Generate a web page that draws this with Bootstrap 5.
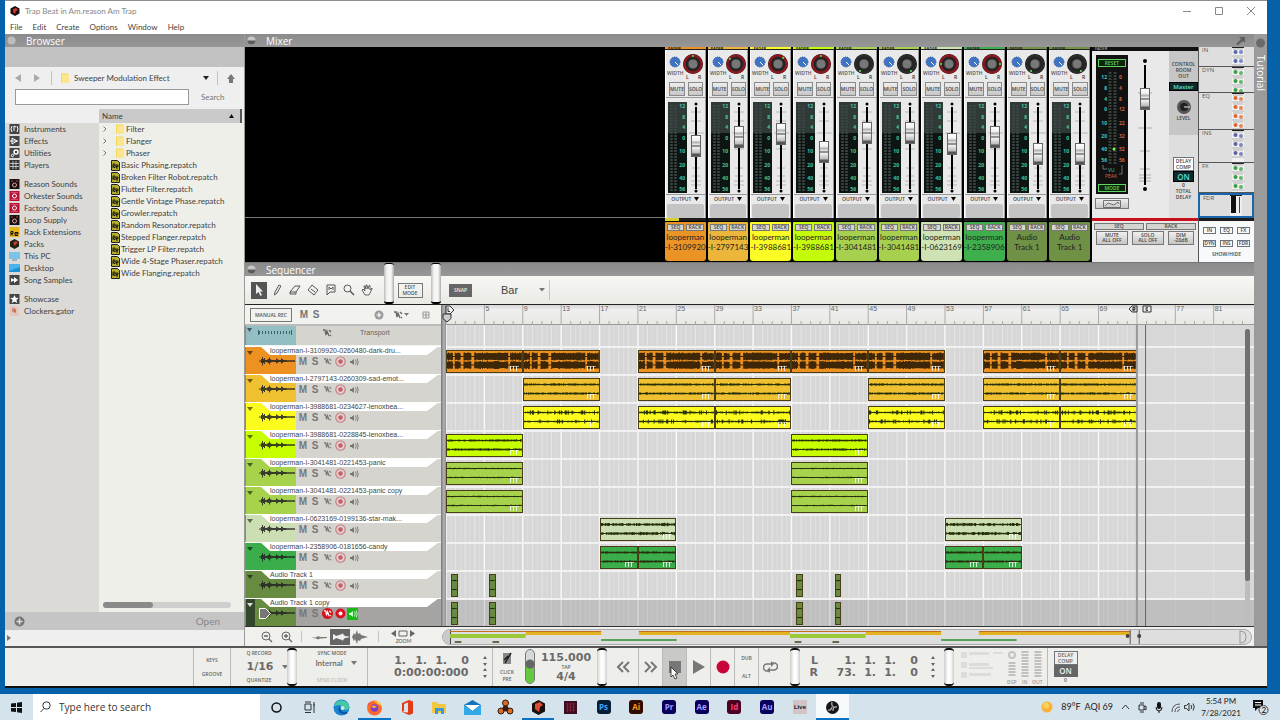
<!DOCTYPE html>
<html lang="en">
<head>
<meta charset="utf-8">
<meta name="viewport" content="width=device-width, initial-scale=1">
<title>Trap Beat in Am.reason Am Trap</title>
<link rel="stylesheet" href="https://cdn.jsdelivr.net/npm/bootstrap@5.3.0/dist/css/bootstrap.min.css">
<style>
:root{--ui:"Lato","Open Sans",sans-serif;--lab:"Open Sans","Noto Sans",sans-serif;--arial:"Liberation Sans",Arial,sans-serif;--num:"DejaVu Sans",sans-serif;--ink:#3f3f3f;--dim:#6c6c6c}
body{font-family:var(--ui);font-size:8px;line-height:12px;color:var(--ink);background:#0561a9;overflow:hidden}
button,input,select{font:inherit;color:inherit;padding:0;border:0;background:none;border-radius:0}
button{line-height:inherit}
svg{display:block;flex:none}
a{color:inherit;text-decoration:none}
.win{margin:0 13px 6px 5px;background:#fff;border-bottom:2px solid #101010;min-height:0}
.titlebar{height:20px;border-top:1px solid #8c8f92;color:#888;font-size:8px}
.menubar{height:14px;font-size:8px;color:#444;gap:10px;padding-left:5px}
.panelhead{height:13px;background:linear-gradient(#8b8b8b,#979797);color:#fff;font-family:var(--lab);font-size:10px;font-weight:500;line-height:12px;padding-left:2px;gap:10px}
.browser{width:240px;background:#efefef;border-right:1px solid #999}
.browser .band{height:20px;background:#c2c2c2}
.browser .navrow{height:22px}
.findbox{width:174px;height:16px;border:1px solid #999;background:#fff;margin-left:10px}
.places{width:94px;background:#dcdad7}
.places a,.files a{display:flex;align-items:center;height:12px;white-space:nowrap;font-size:8px}
.places .topcap{height:14px;background:#efefef}
.places a{padding-left:4px;gap:4px}
.places a.brk{margin-top:7px}
.files{background:#efefea;min-width:0}
.files .colhead{height:14px;background:#cacaca;padding:0 5px 0 3px;border-right:2px solid #555;margin-right:2px}
.files a{padding-left:12px;gap:1px}
.files a.dir{padding-left:4px;gap:8px}
.files a.dir span{margin-left:-10px;padding-left:3px}
.hscroll{height:6px;border-radius:3px;background:#cfcfcf;margin:0 13px 4px 4px}
.hscroll div{width:50px;height:6px;border-radius:3px;background:#8a8a8a}
.bfoot{height:18px;background:#c5c5c5;padding:0 24px 0 9px;font-size:10px;color:#888}
.bstat{height:16px;padding-left:1px}
.mixer{height:215px;background:#000}
.mixer .rack{border-bottom:1px solid #777;height:171px}
.strips{width:427px}
.strip{flex:1 1 0;min-width:0;padding-right:2px;font-family:var(--lab)}
.cap{height:3px;font-size:4px;line-height:3px;font-weight:700;color:#222;padding-left:3px;border-bottom:1px solid #222}
.face{background:#e9e9e9;height:168px;border-left:1px solid #fff;border-right:1px solid #999}
.knobs{height:30px}
.mini{font-family:var(--lab);font-size:5px;line-height:6px;font-weight:600;color:#444}
.ms{height:18px;padding:2px 3px 0;gap:3px;border-bottom:1px solid #999}
.ms button{flex:1;height:14px;background:linear-gradient(#eee,#c6c6c6);border:1px solid #8a8a8a;line-height:12px;text-align:center}
.fadebox{height:97px;border-bottom:1px solid #999;position:relative}
.vslot{position:absolute;width:12px;height:82px;left:24px;top:9px}
.vfader{-webkit-appearance:none;appearance:none;position:absolute;left:50%;top:50%;width:82px;height:12px;margin:-6px 0 0 -41px;transform:rotate(-90deg)}
.vfader::-webkit-slider-runnable-track{height:12px;background:linear-gradient(transparent 5px,#000 5px,#000 7px,transparent 7px)}
.vfader::-webkit-slider-thumb{-webkit-appearance:none;width:22px;height:10px;margin-top:1px;border:1px solid #666;background:linear-gradient(to right,#555 0 2px,#bbb 3px,#f4f4f4 9px,#333 10px,#eee 11px,#aaa 14px,#eee 15px,#fff)}
.out{height:8px;line-height:8px}
.well{height:14px;background:#c4c4c4;margin:1px 1px 0;border-radius:2px}
.bar3{height:3px;background:#1c1c1c}
.chname{height:39px;margin-top:1px;border-radius:1px 1px 3px 3px;text-align:center;font-family:var(--ui);font-size:8px;line-height:10px;color:#222}
.sr{gap:2px;padding:2px 2px 1px}
.sr button{flex:1;height:7px;background:#d4d4d0;border:1px solid #777;line-height:5px}
.master{width:106px;background:#e9e9e9;font-family:var(--lab)}
.master .cap2{height:4px;background:#111;color:#ccc;font-size:4px;line-height:4px;padding-left:3px}
.vu{width:32px;height:139px;background:#111;margin:4px 0 0 4px;padding:4px 2px}
.vu button{height:8px;width:100%;color:#5fd45f;border:1px solid #5fd45f;line-height:6px;text-align:center;background:#0b240b;font-size:5px;font-weight:600}
.ctl{width:29px;background:linear-gradient(#c6c6c6 84px,#dedede 84px);text-align:center}
.lcd{background:#10272b;color:#57e0d0;height:9px;line-height:8px;font-size:6px;font-weight:600;border:1px solid #000}
.mbtn{background:linear-gradient(#efefef,#c6c6c6);border:1px solid #777;text-align:center}
.sect{width:56px;background:#dedede;font-family:var(--lab);border-left:1px solid #555}
.sect .sec{border-bottom:1px solid #555;font-size:6px;line-height:7px;color:#555;padding:0 10px 0 3px}
.sect .sel{border:2px solid #1a66ad;margin-left:-1px}
.tutor{width:13px;background:#9b9b9b;color:#fff;font-family:var(--lab);font-size:10px;line-height:12px}
.tutor span{writing-mode:vertical-rl;margin-top:6px}
.toolbar{height:29px;background:linear-gradient(#f7f7f4,#eaeae5);border-bottom:1px solid #222}
.notch{width:10px;margin-top:-13px;height:41px;background:linear-gradient(to right,#bbb,#f4f4f2 3px,#f8f8f8 7px,#aaa);border-top:1px solid #000;border-bottom:2px solid #000;border-radius:3px;position:relative}
.tbtn{width:18px;height:17px;display:flex;align-items:center;justify-content:center}
.tbtn.on{background:#555;width:16px;margin:0 1px}
.boxed{border:1px solid #777;font-family:var(--lab);font-size:5px;font-weight:600;line-height:6px;text-align:center;color:#555}
.snap{width:23px;height:13px;background:#666;color:#eee;font-family:var(--lab);font-size:5px;font-weight:600}
.gridsel{font-family:var(--arial);font-size:11px;appearance:none;width:30px;color:#444}
.tracks{width:196px;background:#f2f2ee;overflow:hidden}
.thead{height:20px;border-bottom:1px solid #bbb}
.msb{font-family:var(--arial);font-weight:700;font-size:10px;color:#777;width:12px;text-align:center}
.trow{height:28px;position:relative;background:#d6d4cf;border-top:1px solid #fff;flex:none}
.trow.selrow{background:#a6a4a2}
.tcol{width:51px;height:100%;position:absolute;left:0;top:0;border-left:1px solid #888}
.tab{position:absolute;left:15px;right:2px;top:-1px;height:9px;background:#fff;clip-path:polygon(0 0,100% 0,calc(100% - 12px) 100%,10px 100%);padding-left:10px;font-family:var(--arial);font-size:7px;line-height:9px;white-space:nowrap;color:#444}
.tctl{position:absolute;left:52px;top:8px;height:13px}
.tctl button{width:12px;height:12px;display:flex;align-items:center;justify-content:center}
.tctl .ico{width:13px}
.trans{height:20px;background:#d6d4cf;border-top:1px solid #bbb;flex:none;position:relative;margin-bottom:1px}
.gutter{width:5px;background:linear-gradient(to right,#777,#b5b5b5 3px,#8a8a8a)}
.ruler{height:20px;background:linear-gradient(#d8d8d8,#efefef 5px,#e8e8e4);border-bottom:1px solid #999;position:relative;font-family:var(--arial);font-size:7px;color:#666}
.ruler span{position:absolute;top:-1px;line-height:9px;padding-left:1px}
.field{background:#d7d7d7;overflow:hidden;position:relative}
.gridlines{position:absolute;inset:0;width:100%;height:100%}
.lane{height:28px;flex:none;position:relative;border-top:2px solid #f1f1f1}
.lane.first{height:21px;border-top:0}
.lane.selrow{background:rgba(120,120,120,.25)}
.clip{position:absolute;top:2px;height:23px;border:1px solid #4a3c14;overflow:hidden}
.clip svg{width:100%;height:100%}
.clip i{position:absolute;right:3px;bottom:1px;width:9px;height:5px;background:repeating-linear-gradient(to right,#fffc 0 1px,transparent 1px 3px);border-top:1px solid #fff8}
.vscroll{position:absolute;right:4px;top:4px;bottom:4px;width:5px;border-radius:3px;background:#bdbdbd}
.vscroll div{height:86%;border-radius:3px;background:#707070}
.zoomrow{height:20px;background:#f0f0ec;border-top:1px solid #333}
.over{width:calc(100% - 199px);margin-right:2px;height:16px;border:1px solid #aaa;border-radius:8px;background:#dedede;overflow:hidden}
.transport{height:40px;background:#eeeeea;border-top:2px solid #555;color:var(--dim);font-family:var(--lab)}
.transport .cell{border-left:1px solid #bbb;display:flex;flex-direction:column;align-items:center;justify-content:center;flex:none}
.transport .gap9{width:10px;flex:none;background:linear-gradient(to right,#ccc,#fff 4px,#fafafa 7px,#ccc);border-top:2px solid #111;border-bottom:2px solid #111;border-radius:4px}
.tiny{font-size:5px;line-height:7px;font-weight:600;color:#666}
.num{font-family:var(--num);font-weight:700;font-size:11px;line-height:12px;color:#6a6a6a}
.num span{display:inline-block;text-align:right}
.taskbar{height:26px;background:#d5e3ec;font-family:var(--ui);color:#222}
.tsearch{width:227px;background:#fff;padding-left:7px}
.tsearch input{font-size:10px;width:180px;line-height:16px;outline:0;font-family:var(--lab)}
.tsearch input::placeholder{color:#333;opacity:1}
.tapps{width:589px;font-family:var(--lab)}
.tapps button{flex:1 1 0;display:flex;align-items:center;justify-content:center;border-bottom:2px solid transparent;border-top:2px solid transparent}
.tapps .run{border-bottom-color:#0a72c4}
.tapps .act{background:#f6fafc;border-top-color:#f6fafc}
.app{width:14px;height:14px;border-radius:3px;font-size:8px;line-height:14px;font-weight:700;text-align:center}
</style>
</head>
<body class="vh-100 d-flex flex-column">
<svg width="0" height="0" class="position-absolute">
<defs>
<symbol id="auto" viewBox="0 0 10 10"><path d="M1 2h2l1 5 1-4 2 5M7 2l2 2M8 7l1 1" fill="none" stroke="currentColor" stroke-width="1.3"/></symbol>
<symbol id="rec" viewBox="0 0 10 10"><circle cx="5" cy="5" r="4.3" fill="none" stroke="#cf7780"/><circle cx="5" cy="5" r="2" fill="#cf5b66"/></symbol>
<symbol id="spk" viewBox="0 0 10 10"><path d="M1 4h1.500l2.500-2v6L2.500 6H1z" fill="currentColor"/><path d="M6.500 2.500q1.500 2.500 0 5M8.200 1.500q2 3.500 0 7" fill="none" stroke="currentColor" stroke-width=".9"/></symbol>
<symbol id="wave" viewBox="0 0 36 12"><path d="M0 5.500h2V4h1V2h1v2h1V3h1v2h2l1-1h1V2.500h1V4l2 1h4V4l1-1v1l2 1h2V3.500h1V4h1v1h3l1 .2h8v1.600h-8l-1 .2h-3v1h-1v.5h-1V7h-2l-2 1v1l-1-1V7h-4l-2 1v1.500h-1V8H9L8 7H6v2H5V8H4v2.500H3V8H2V6.500H0z" fill="currentColor"/></symbol>
<symbol id="folder" viewBox="0 0 10 10"><path d="M1 .5h7v9H1z" fill="#f2d65e"/><path d="M2 1.500h7V10H2z" fill="#fbe68d"/></symbol>
<symbol id="patch" viewBox="0 0 9 11"><path d="M.5.5h6l2 2v8h-8z" fill="#b5ae2a" stroke="#222"/><path d="M2 8V4h2v2H2l2 2M5 6.500h2V5H5v3h2" fill="none" stroke="#111" stroke-width=".9"/></symbol>
<symbol id="half" viewBox="0 0 10 10"><circle cx="5" cy="5" r="4.500" fill="#c6c6c6"/><path d="M.5 5a4.500 4.500 0 0 0 9 0z" fill="#5c5c5c"/></symbol>
<symbol id="updn" viewBox="0 0 6 12"><path d="M1 4l2-3 2 3zM1 8l2 3 2-3z" fill="#666"/></symbol>
</defs>
</svg>

<main class="win flex-grow-1 d-flex flex-column">
  <header class="titlebar d-flex align-items-center flex-shrink-0">
    <svg class="ms-1 me-1" width="12" height="10" viewBox="-1 0 12 10"><path d="M5 0l4.500 2.500v5L5 10 .5 7.500v-5z" fill="#1a0d0d"/><path d="M3 3l3-1 2 2-2 1-1 3-2-2z" fill="#d0312b"/></svg>
    <span class="flex-grow-1">Trap Beat in Am.reason Am Trap</span>
    <button aria-label="Minimize" class="me-4"><svg width="8" height="8"><path d="M0 4.500h8" stroke="#888"/></svg></button>
    <button aria-label="Maximize" class="me-4"><svg width="8" height="8"><path d="M.5.5h7v7h-7z" fill="none" stroke="#888"/></svg></button>
    <button aria-label="Close" class="me-2"><svg width="8" height="8" class="me-1"><path d="M0 0l8 8M8 0L0 8" stroke="#888"/></svg></button>
  </header>
  <nav class="menubar d-flex align-items-center flex-shrink-0"><a href="#">File</a><a href="#">Edit</a><a href="#">Create</a><a href="#">Options</a><a href="#">Window</a><a href="#">Help</a></nav>

  <div class="d-flex flex-grow-1" style="min-height:0">
    <aside class="browser d-flex flex-column flex-shrink-0">
      <div class="panelhead d-flex align-items-center"><svg width="9" height="9"><circle cx="4.500" cy="4.500" r="4" fill="#bcbcbc"/></svg><span>Browser</span></div>
      <div class="band"></div>
      <div class="navrow d-flex align-items-center ps-2">
        <button aria-label="Back"><svg width="12" height="10"><path d="M8 1v8L2 5z" fill="#aaa"/></svg></button>
        <button aria-label="Forward" class="ms-2"><svg width="10" height="10"><path d="M1 1v8l6-4z" fill="#aaa"/></svg></button>
        <div class="vr mx-2 my-1"></div>
        <svg width="10" height="12"><use href="#folder"/></svg>
        <span class="ms-1 flex-grow-1">Sweeper Modulation Effect</span>
        <svg width="6" height="4" class="me-1"><path d="M0 0h6L3 4z" fill="#222"/></svg><div class="vr ms-1 me-2 my-1"></div>
        <button aria-label="Up" class="me-2"><svg width="10" height="9"><path d="M5 0l4 5H7v4H3V5H1z" fill="#777"/></svg></button>
      </div>
      <form class="d-flex align-items-center pb-1"><input class="findbox" type="text" aria-label="Search browser"><button type="button" class="ms-2 ps-1" style="color:#777">Search</button></form>
      <div class="d-flex flex-grow-1">
        <nav class="places" id="places"><div class="topcap"></div></nav>
        <div class="files flex-grow-1 d-flex flex-column">
          <div class="colhead d-flex align-items-center justify-content-between"><span>Name</span><svg width="6" height="6"><path d="M0 5h5L2.500 1z" fill="#111"/></svg></div>
          <div id="files" class="flex-grow-1"></div>
          <div class="hscroll"><div></div></div>
        </div>
      </div>
      <div class="bfoot d-flex align-items-center justify-content-between"><button aria-label="Add"><svg width="11" height="11"><circle cx="5.500" cy="5.500" r="5" fill="#777"/><path d="M2.500 5.500h6M5.500 2.500v6" stroke="#ddd" stroke-width="1.500"/></svg></button><button>Open</button></div>
      <div class="bstat d-flex align-items-center"><svg width="6" height="6"><path d="M1 0v6l4-3z" fill="#777"/></svg></div>
    </aside>

    <div class="flex-grow-1 d-flex flex-column" style="min-width:0">
      <div class="panelhead d-flex align-items-center flex-shrink-0"><svg width="9" height="9"><use href="#half"/></svg><span class="flex-grow-1">Mixer</span><svg width="10" height="8" class="me-2"><path d="M3 0h6v6L7 4 2 8 0 7l5-5z" fill="#606060"/></svg></div>
      <section class="mixer d-flex flex-shrink-0">
        <div class="flex-grow-1"><div class="rack"></div></div>
        <div class="strips d-flex" id="strips"></div>
        <div class="master d-flex flex-column">
          <div class="cap2">FADER</div>
          <div class="d-flex" style="height:167px">
            <div>
              <div class="vu d-flex flex-column"><button>RESET</button>
                <svg class="flex-grow-1" width="28" viewBox="0 0 28 117" id="vu"></svg>
                <button>MODE</button></div>
              <button class="mbtn d-block" style="width:34px;height:11px;margin:4px 0 0 3px" aria-label="Curve"><svg class="mx-auto" width="18" height="8"><path d="M.5.500h17v7H.500zM2 6l3-3 3 1 3 1 4-3 1 2" fill="none" stroke="#555" stroke-width=".8"/></svg></button>
            </div>
            <div class="flex-grow-1 position-relative">
              <svg width="32" height="150"><path d="M9 42h14M9 77h14M11 100h10M11 118h10M10 124h12M10 127h12M10 130h12" stroke="#aaa"/><circle cx="16" cy="10" r="2"/><circle cx="16" cy="138" r="2"/></svg>
              <div class="vslot" style="left:10px;top:14px;height:120px"><input class="vfader" style="width:120px;margin-left:-60px" type="range" min="0" max="98" value="75" aria-label="Master level"></div>
            </div>
            <div class="ctl mini"><div style="padding:10px 0 3px">CONTROL<br>ROOM<br>OUT</div><div class="lcd">Master</div>
              <svg class="mx-auto mt-2" width="18" height="16"><circle cx="9" cy="8" r="7" fill="#555"/><circle cx="9" cy="8" r="4" fill="#222"/><path d="M9 8h6" stroke="#eee"/></svg><div>LEVEL</div>
              <div style="height:36px"></div><div class="mx-1 bg-white border border-secondary">DELAY<br>COMP</div><button class="lcd d-block mx-1" style="width:21px;height:11px;font-size:8px;line-height:9px">ON</button><div>0<br>TOTAL<br>DELAY</div></div>
          </div>
          <div style="height:3px;background:#c8101c"></div>
          <div class="sr mini d-flex"><button>SEQ</button><button>RACK</button></div>
          <div class="mini d-flex gap-1 px-1" style="line-height:5px"><button class="mbtn flex-fill" style="height:14px">MUTE<br>ALL OFF</button><button class="mbtn flex-fill">SOLO<br>ALL OFF</button><button class="mbtn flex-fill">DIM<br>-20dB</button></div>
        </div>
        <div class="sect d-flex flex-column" id="sect"></div>
      </section>

      <div class="panelhead d-flex align-items-center flex-shrink-0" style="border-top:1px solid #777;height:14px"><svg width="9" height="9"><use href="#half"/></svg><span>Sequencer</span></div>
      <div class="toolbar d-flex align-items-center flex-shrink-0" id="toolbar">
        <div class="d-flex align-items-center flex-shrink-0" style="width:139px;padding-left:5px">
          <button class="tbtn on" aria-label="Select"><svg width="10" height="12"><path d="M2 0v10l2.500-2 2 4 1.500-1-2-3.500h3z" fill="#eee"/></svg></button>
          <button class="tbtn" aria-label="Pencil"><svg width="10" height="12"><path d="M3 8l4-7 2 1-4 7-2.500 2z" fill="none" stroke="#555"/></svg></button>
          <button class="tbtn" aria-label="Eraser"><svg width="12" height="10"><path d="M1 7l5-6h5L7 7v2H1zM1 7h6" fill="none" stroke="#555"/></svg></button>
          <button class="tbtn" aria-label="Razor"><svg width="12" height="12"><path d="M1 6l4-5 6 5-4 5zM4 5l4 3" fill="none" stroke="#555"/></svg></button>
          <button class="tbtn" aria-label="Mute"><svg width="12" height="12"><path d="M2 1h8v7H5l-3 3zM4 6V3l2 2 2-2v3" fill="none" stroke="#555"/></svg></button>
          <button class="tbtn" aria-label="Magnify"><svg width="12" height="12"><circle cx="4.500" cy="4.500" r="3.500" fill="none" stroke="#555"/><path d="M7 7l4 4" stroke="#555" stroke-width="1.500"/></svg></button>
          <button class="tbtn" aria-label="Hand"><svg width="12" height="12"><path d="M4 11L1 6l1-1 2 2-1-5h1l1 3V1h1l1 4 1-3.500h1L9 6l2-2v1L8 11z" fill="none" stroke="#555" stroke-width=".9"/></svg></button>
        </div>
        <div class="notch flex-shrink-0"></div>
        <div class="flex-shrink-0 d-flex justify-content-center" style="width:37px;padding-right:5px"><button class="boxed" style="width:25px;height:15px">EDIT<br>MODE</button></div>
        <div class="notch flex-shrink-0"></div>
        <button class="snap ms-2" style="margin-right:29px">SNAP</button>
        <select class="gridsel" aria-label="Snap value"><option>Bar</option></select>
        <svg width="6" height="4" class="ms-2"><path d="M0 0h6L3 3.500z" fill="#777"/></svg>
        <div class="vr ms-1 my-1"></div>
      </div>
      <section class="d-flex flex-grow-1" style="min-height:0">
        <div class="tracks d-flex flex-column flex-shrink-0" id="tracks">
          <div class="thead d-flex align-items-center flex-shrink-0"><button class="boxed" style="width:42px;height:14px;margin:0 6px 0 5px">MANUAL REC</button><button class="msb">M</button><button class="msb me-5">S</button>
            <svg width="10" height="10" class="ms-1"><circle cx="5" cy="5" r="4.500" fill="#9a9a9a"/><path d="M2.500 5h5M5 2.500v5" stroke="#fff" stroke-width="1.200"/></svg><svg class="ms-2" width="12" height="10" color="#666"><use href="#auto"/></svg><svg width="6" height="4"><path d="M0 0h5L2.500 3z" fill="#777"/></svg><svg class="ms-2 ps-1" width="13" height="8"><path d="M1 1h6v6H1zM4 1v6M1 4h6" fill="none" stroke="#999"/></svg></div>
          <div class="trans"><div class="tcol" style="background:#93bfc2"><svg width="46" height="12"><path d="M1 2h5L3.500 6z" fill="#456"/><path d="M12.500 4v5M45.500 4v5" stroke="#3c6468"/><path d="M13 6.500h32" stroke="#3c6468" stroke-width="3" stroke-dasharray="1 2"/></svg></div><div class="tctl d-flex align-items-center" style="top:0;left:77px;color:#666"><svg width="10" height="10"><use href="#auto"/></svg><span style="margin-left:28px;font-family:var(--arial);font-size:7px">Transport</span></div></div>
        </div>
        <div class="gutter"></div>
        <div class="flex-grow-1 d-flex flex-column" style="min-width:0">
          <div class="ruler flex-shrink-0" id="ruler"></div>
          <div class="field flex-grow-1 d-flex flex-column" id="field"></div>
        </div>
      </section>
      <div class="zoomrow d-flex align-items-center flex-shrink-0">
        <button aria-label="Zoom out" style="margin-left:16px"><svg width="12" height="12"><circle cx="5" cy="5" r="4" fill="none" stroke="#666"/><path d="M3 5h4M8 8l3 3" stroke="#666" stroke-width="1.300"/></svg></button>
        <button aria-label="Zoom in" class="ms-2"><svg width="12" height="12"><circle cx="5" cy="5" r="4" fill="none" stroke="#666"/><path d="M3 5h4M5 3v4M8 8l3 3" stroke="#666" stroke-width="1.300"/></svg></button>
        <div class="vr mx-2 my-1"></div>
        <svg width="20" height="12"><path d="M1 6.500h5L8 5l2 1h7v1l-7 .5L8 8.500 6 7.500z" fill="#777"/></svg>
        <div style="background:#666"><svg width="20" height="16"><path d="M2 8h1V5l2 1 1 1 6-2V4l3 3 4 .5v1L15 9l-3 3v-1L6 9l-1 1-2 1V8z" fill="#eee"/></svg></div>
        <svg width="20" height="14"><path d="M2 7l2-4 1 2 2-5 1 4 2-1 1 2 7 2-7 2-1 2-2-1-1 4-2-5-1 2z" fill="#777"/></svg>
        <div class="vr mx-2 my-1"></div>
        <div class="tiny text-center ms-1 me-auto"><svg width="25" height="9"><path d="M0 4.500L5 1v7zM24 4.500L19 1v7z" fill="#666"/><path d="M8 2h8v5H8z" fill="none" stroke="#666"/></svg>ZOOM</div>
        <div class="over"><svg id="over" width="100%" height="14" viewBox="0 0 806 14" preserveAspectRatio="none"></svg></div>
      </div>
    </div>
    <aside class="tutor d-flex flex-column align-items-center"><svg width="11" height="11" class="mt-1"><circle cx="5.500" cy="5" r="4.500" fill="#6a6a6a"/></svg><span>Tutorial</span></aside>
  </div>

  <footer class="transport d-flex flex-shrink-0">
    <div style="width:188px"></div>
    <div class="cell tiny" style="width:37px;gap:7px"><button>KEYS</button><button>GROOVE</button></div>
    <div class="cell tiny" style="width:57px"><span>Q RECORD</span><button class="num my-1 d-flex align-items-center ps-3">1/16<svg width="6" height="4" class="ms-2"><path d="M0 0h6L3 4z" fill="#777"/></svg></button><span>QUANTIZE</span></div>
    <div class="gap9"></div>
    <div class="cell tiny border-0" style="width:70px"><span>SYNC MODE</span><button class="d-flex align-items-center ps-2" style="font-family:var(--ui);font-size:8px;line-height:12px">Internal<svg width="6" height="4" class="ms-2"><path d="M0 0h6L3 4z" fill="#777"/></svg></button><span class="mt-2" style="color:#bbb">SEND CLOCK</span></div>
    <div class="cell num" style="width:125px;padding-left:22px"><div class="d-flex align-items-center"><div style="width:76px;margin-right:12px"><span style="width:12px">1.</span><span style="width:21px">1.</span><span style="width:20px">1.</span><span style="width:22px">0</span><br>0:00:00:000</div><div><svg width="6" height="12"><use href="#updn"/></svg><svg width="6" height="12"><use href="#updn"/></svg></div></div></div>
    <div class="cell tiny" style="width:29px"><svg width="10" height="13"><path d="M1 1h8v11H1z" fill="#888"/><path d="M3 11L9 1M2 8l4-4" stroke="#222" stroke-width="1.500"/></svg><span class="mt-1">CLICK</span><span>PRE</span></div>
    <div class="position-relative" style="width:18px"><svg width="18" height="38"><rect x="4.500" y="1.500" width="9" height="34" rx="4.500" fill="#d8d8d8" stroke="#777"/><path d="M5 16h8v15a4 4 0 0 1-8 0z" fill="#63c83f"/><circle cx="9" cy="16" r="4.500" fill="#666"/></svg></div>
    <div class="cell num border-0" style="width:54px"><span>115.000</span><span class="tiny" style="font-family:var(--lab)">TAP</span><span>4/4</span></div>
    <div class="gap9 ms-1"></div>
    <div class="cell border-0" style="width:31px"><button aria-label="Rewind"><svg width="14" height="12"><path d="M7 1L2 6l5 5M13 1L8 6l5 5" fill="none" stroke="#777" stroke-width="2"/></svg></button></div>
    <div class="cell" style="width:24px"><button aria-label="Fast forward"><svg width="14" height="12"><path d="M1 1l5 5-5 5M7 1l5 5-5 5" fill="none" stroke="#777" stroke-width="2"/></svg></button></div>
    <div class="cell position-relative" style="width:24px;background:#c9c9c6"><button aria-label="Stop"><svg width="12" height="12"><path d="M0 0h12v12H0z" fill="#777"/></svg></button><svg class="position-absolute" style="left:7px;top:18px" width="9" height="14"><path d="M1 1v10l2-2 2 4 2-1-2-4h3z" fill="#fff" stroke="#222" stroke-width=".8"/></svg></div>
    <div class="cell" style="width:24px"><button aria-label="Play"><svg width="12" height="14"><path d="M0 0v14l12-7z" fill="#777"/></svg></button></div>
    <div class="cell" style="width:24px"><button aria-label="Record"><svg width="14" height="14"><circle cx="7" cy="7" r="6.500" fill="#c8063c"/></svg></button></div>
    <div class="cell tiny" style="width:24px;gap:11px"><button>DUB</button><button>ALT</button></div>
    <div class="cell" style="width:28px"><button aria-label="Loop" class="pe-1"><svg width="15" height="12"><path d="M6 10H4a3.500 3.500 0 0 1 0-7h5M9 2h2a3.500 3.500 0 0 1 0 7H6" fill="none" stroke="#777" stroke-width="1.500"/><path d="M8 0l3 3-3 3zM7 6L4 9l3 3z" fill="#777"/></svg></button></div>
    <div class="gap9 ms-1"></div>
    <div class="cell num border-0" style="width:144px"><div class="d-flex align-items-center"><div style="width:110px;margin-right:12px"><span style="width:10px">L</span><span style="width:38px">1.</span><span style="width:20px">1.</span><span style="width:20px">1.</span><span style="width:22px">0</span><br><span style="width:10px">R</span><span style="width:38px">73.</span><span style="width:20px">1.</span><span style="width:20px">1.</span><span style="width:22px">0</span></div><div><svg width="6" height="12"><use href="#updn"/></svg><svg width="6" height="12"><use href="#updn"/></svg></div></div></div>
    <div class="gap9"></div>
    <div class="cell border-0" style="width:93px"><svg width="92" height="36" style="font-family:var(--lab);font-size:5px;font-weight:600"><g fill="#dcdcd8"><path d="M6 3h6v6H6zM6 13h6v6H6zM6 23h6v6H6zM14 3h20v3H14zM14 14h20v3H14zM14 18h24v2H14zM14 24h22v3H14zM38 3h10v2h-10z"/></g><circle cx="57" cy="6" r="3" fill="none" stroke="#c4c4c0" stroke-width="2"/><g fill="none" stroke="#c0c0bc" stroke-width="7" stroke-dasharray="2 1"><path d="M57 13v15M70 2v26M83 2v26"/></g><g fill="#999"><text x="52" y="35">DSP</text><text x="67" y="35">IN</text><text x="77" y="35">OUT</text></g></svg></div>
    <div class="cell tiny" style="width:36px"><div class="border border-secondary text-center" style="width:24px;line-height:6px">DELAY<br>COMP</div><button style="width:24px;height:12px;background:#666;color:#eee;font-size:8px;line-height:12px">ON</button><span>0</span></div>
  </footer>
</main>

<footer class="taskbar d-flex flex-shrink-0">
  <button aria-label="Start" style="width:33px" class="d-flex align-items-center justify-content-center"><svg width="11" height="11"><path d="M0 1.500L5 1v4H0zM6 .8L11 0v5H6zM0 6h5v4l-5-.5zM6 6h5v5l-5-.8z" fill="#111"/></svg></button>
  <label class="tsearch d-flex align-items-center"><svg width="11" height="12" class="me-2"><circle cx="6.500" cy="4.500" r="3.700" fill="none" stroke="#333"/><path d="M4 7.500L.5 11" stroke="#333"/></svg><input type="text" placeholder="Type here to search"></label>
  <div class="tapps d-flex" id="tapps"></div>
  <div class="ms-auto d-flex align-items-center" style="font-size:9px">
    <svg width="12" height="12"><circle cx="6" cy="6" r="5.500" fill="#f9b233"/><circle cx="5" cy="4.500" r="3" fill="#fdd35f"/></svg><span class="ms-2">89°F&nbsp; AQI 69</span>
    <svg width="9" height="6" class="ms-2 me-2"><path d="M1 5l3.500-4L8 5" fill="none" stroke="#333"/></svg>
    <svg width="9" height="11" class="me-2"><path d="M1 3h5v5H1zM6 5l2-1v4L6 7M2 1h4M2 10h4" fill="none" stroke="#333"/></svg>
    <svg width="8" height="11" class="me-2"><rect x="2" width="4" height="7" rx="2" fill="#111"/><path d="M1 5q0 4 3 4t3-4M4 9v2" stroke="#111" fill="none"/></svg>
    <svg width="9" height="9" class="me-1"><path d="M1 9Q1 1 9 1M4 9q0-5 5-5M6.500 9q0-2 2.500-2.500" fill="none" stroke="#555"/></svg>
    <svg width="12" height="10" class="me-1"><path d="M.5 3.500h2L5 1v8L2.500 6.500h-2zM7 3q1.500 2 0 4M9 1.500q2.500 3.500 0 7" fill="none" stroke="#333"/></svg>
    <div class="text-center" style="font-size:8px;line-height:12px;width:42px">5:54 PM<br>7/28/2021</div>
    <svg width="20" height="18" style="margin:0 10px 0 8px"><path d="M3 2h10v8H8l-3 3v-3H3z" fill="#111"/><path d="M5 4.500h6M5 7h6" stroke="#fff"/><circle cx="13.500" cy="12" r="4.500" fill="#d5e3ec" stroke="#444"/><text x="11.500" y="15" font-size="8">2</text></svg>
  </div>
</footer>

<script>
const $ = id => document.getElementById(id);
let seed = 7;
const rnd = () => (seed = (seed * 16807) % 2147483647) / 2147483647;

/* browser */
const sq = (bg, inner) => `<svg width="11" height="10" viewBox="0 0 11 10"><path d="M.5 0h10v10H.5z" fill="${bg}"/>${inner}</svg>`;
const places = [
 ['Instruments', sq('#444','<path d="M3 2q-2 3 0 6M8 2q2 3 0 6M5 7V2l2 1" fill="none" stroke="#fff"/>')],
 ['Effects', sq('#444','<path d="M3 2v6l5-3zM1 5h8" fill="none" stroke="#fff"/>')],
 ['Utilities', sq('#444','<circle cx="7" cy="4" r="2" fill="none" stroke="#fff" stroke-width="1.500"/><circle cx="3.500" cy="7.500" r="1.200" fill="none" stroke="#fff"/>')],
 ['Players', sq('#333','<path d="M1 3.500h9M1 6.500h9M4 1v8M7 1v8" stroke="#ddd" stroke-width=".8"/>')],
 ['Reason Sounds', sq('#161212','<circle cx="5.500" cy="6" r="2" fill="none" stroke="#e8a0a0"/><path d="M2 2h2M7 2h2" stroke="#c33"/>'), 1],
 ['Orkester Sounds', sq('#b80f35','<circle cx="5.500" cy="5" r="2" fill="none" stroke="#fff"/><path d="M2 1.500h7M2 8.500h7" stroke="#e87090" stroke-width=".6"/>')],
 ['Factory Sounds', sq('#b80f35','<circle cx="5.500" cy="5" r="2" fill="none" stroke="#fff"/><path d="M2 1.500h7M2 8.500h7" stroke="#e87090" stroke-width=".6"/>')],
 ['Loop Supply', sq('#161212','<circle cx="5.500" cy="6" r="2" fill="none" stroke="#e8a0a0"/><path d="M2 2h2M7 2h2" stroke="#c33"/>')],
 ['Rack Extensions', sq('#e7b417','<path d="M2 8.500v-4h2v2H2l2 2M6 7h3V5.500H6v3h3" fill="none" stroke="#111"/>')],
 ['Packs', '<svg width="11" height="10" viewBox="0 0 11 10"><path d="M5.500 0L10 2.500v5L5.500 10 1 7.500v-5z" fill="#221"/><path d="M4 4l3-2 2 2-2 1-1 2z" fill="#d33"/></svg>'],
 ['This PC', '<svg width="11" height="10"><path d="M0 1h11v7H0z" fill="#7cc3e8"/><path d="M3 9h5" stroke="#789"/></svg>'],
 ['Desktop', '<svg width="11" height="10"><path d="M0 1h11v8H0z" fill="#1f8fd6"/><path d="M0 1h11v3L0 8z" fill="#4bb2ee"/></svg>'],
 ['Song Samples', sq('#444','<path d="M2 3l4 2-4 2zM5 2l4 3-4 3z" fill="#fff"/>')],
 ['Showcase', sq('#444','<path d="M5.500 1l1.200 2.800 3 .2-2.300 2 .8 3-2.700-1.600L2.800 9l.8-3-2.300-2 3-.2z" fill="#fff"/>'), 1],
 ['Clockers.gator', '<svg width="11" height="10"><path d="M1 0h7l2 2v8H1z" fill="#e3c6bd"/><path d="M3 3h3v4M3 5h4" fill="none" stroke="#c0503c"/></svg>']];
places.forEach(([t, i, b]) => $('places').insertAdjacentHTML('beforeend', `<a href="#" class="${b ? 'brk' : ''}">${i}${t}</a>`));
['Filter','Flanger','Phaser'].forEach(t => $('files').insertAdjacentHTML('beforeend', `<a href="#" class="dir"><svg width="4" height="8"><path d="M.5 1.500L3 4 .5 6.500" fill="none" stroke="#777"/></svg><svg width="10" height="10"><use href="#folder"/></svg><span>${t}</span></a>`));
['Basic Phasing','Broken Filter Robot','Flutter Filter','Gentle Vintage Phase','Growler','Random Resonator','Stepped Flanger','Trigger LP Filter','Wide 4-Stage Phaser','Wide Flanging'].forEach(t => $('files').insertAdjacentHTML('beforeend', `<a href="#"><svg width="9" height="11"><use href="#patch"/></svg>${t}.repatch</a>`));

/* mixer strips: first line, second line, colour, fader centre, pan ring, pan angle */
const chans = [
 ['looperman','-I-3109920','#ea9425',147,'#8c1820',0],['looperman','-I-2797143','#ebb63a',138,'#8c1820',-50],
 ['looperman','-I-3988681','#fbfb25',135,'#8c1820',40],['looperman','-I-3988681','#c4fb0b',153,'#8c1820',0],
 ['looperman','-I-3041481','#a8d04f',134,'#2b2b2b',-150],['looperman','-I-3041481','#a8d04f',134,'#2b2b2b',150],
 ['looperman','-I-0623169','#cfe2b4',145,'#8c1820',-90],['looperman','-I-2358906','#3fae4c',138,'#8c1820',90],
 ['Audio','Track 1','#6f9145',155,'#2b2b2b',-150],['Audio','Track 1','#6f9145',155,'#2b2b2b',150]];
const scale = [['12',6],['8',17],['4',27],['0',38],['10',51],['20',65],['40',78],['56',89]];
chans.forEach(([a, b, c, f, ring, ang], n) => $('strips').insertAdjacentHTML('beforeend', `
<div class="strip"><div class="cap" style="background:${c}">FADER</div>
<div class="face"><div class="knobs"><svg width="38" height="30" class="mini">
<circle cx="9" cy="12" r="5" fill="#3f74c4"/><circle cx="9" cy="12" r="5" fill="none" stroke="#27508e" stroke-width="1" stroke-dasharray="1 1"/><path d="M9 12l3 3" stroke="#fff"/>
<circle cx="27" cy="14" r="10" fill="#222"/><circle cx="27" cy="14" r="8.500" fill="none" stroke="${ring}" stroke-width="2.500"/><circle cx="27" cy="14" r="5" fill="#777" stroke="#333"/>
<circle cx="27" cy="6" r="1" fill="#5e5" transform="rotate(${ang} 27 14)"/>
<text x="1" y="25" fill="#555">WIDTH</text><text x="20" y="29" fill="#333">L</text><text x="32" y="29" fill="#333">R</text></svg></div>
<div class="ms mini d-flex"><button>MUTE</button><button>SOLO</button></div>
<div class="fadebox"><svg width="38" height="96"><rect x="2" y="4" width="19" height="91" fill="#0c1512"/><rect x="2" y="4" width="19" height="31" fill="#2f3935"/>
<path d="M5.500 7v86M9.500 7v86" stroke="#3d4644" stroke-width="2.500" stroke-dasharray="2 1"/>
${scale.map(([t, y]) => `<text x="19" y="${y + 4}" text-anchor="end" fill="#45c9a0" style="font-size:5px;font-weight:700">${t}</text>`).join('')}
<path d="M25 14h10M25 23h10M23 35h15M25 51h10M26 70h8M26 78h8M25 83h10M25 87h10" stroke="#aaa" stroke-width=".8"/><circle cx="30" cy="6" r="1.500"/><circle cx="30" cy="93" r="1.500"/></svg>
<div class="vslot"><input class="vfader" type="range" min="0" max="60" value="${179 - f}" aria-label="Channel ${n + 1} level"></div></div>
<div class="out mini d-flex justify-content-center align-items-center" style="gap:3px">OUTPUT<svg width="5" height="4"><path d="M0 0h5L2.500 4z"/></svg></div><div class="well"></div></div>
<div class="bar3"${n ? '' : ' style="background:linear-gradient(to right,#d8d030 14px,#1c1c1c 14px)"'}></div>
<div class="chname" style="background:${c}"><div class="sr mini d-flex"><button>SEQ</button><button>RACK</button></div>${a}<br>${b}</div></div>`));

/* master meter */
const rt = ['0','4','8','12','22','32','52','56'], ys = [10,21,32,42,56,69,82,93];
$('vu').innerHTML = `<path d="M12 5v92M17 5v92" stroke="#34403c" stroke-width="3" stroke-dasharray="2 1"/><circle cx="16" cy="82" r="1.500" fill="#7f3"/>` +
 ys.map((y, i) => `<text x="9" y="${y + 2}" text-anchor="end" font-size="5" font-weight="700" fill="#45c9c0">${scale[i][0]}</text><text x="21" y="${y + 2}" font-size="5" font-weight="700" fill="#d3603c">${rt[i]}</text>`).join('') +
 `<text x="10" y="105" font-size="5" fill="#45c9c0">VU</text><text x="7" y="111" font-size="5" fill="#e06040">PEAK</text><path d="M5 98v4h4M24 98v9h-3" fill="none" stroke="#999" stroke-width=".7"/>`;

/* channel section navigator */
[['IN',20,'#5566b0'],['DYN',26,'#35a040'],['EQ',37,'#e0642c'],['INS',33,'#5c60a8'],['FX',30,'#35a040'],['FDR',25,'#222']].forEach(([t, h, c]) => {
  let k = '';
  if (t === 'FDR') k = '<path d="M1 1h5v17H1z" fill="#111"/><path d="M9.500 2v16" stroke="#444"/>';
  else for (let y = 5; y < h - 2; y += 9) k += `<circle cx="3.500" cy="${y}" r="2" fill="${c}"/><circle cx="9" cy="${y + (t === 'IN' ? 0 : 1)}" r="2" fill="${c}" opacity=".75"/><path d="M0 ${y + 4}h12M1 ${y - 3}h10" stroke="#999" stroke-width=".7"/>`;
  $('sect').insertAdjacentHTML('beforeend', `<div class="sec d-flex justify-content-between ${t === 'FDR' ? 'sel' : ''}" style="height:${h}px"><span>${t}</span><svg width="12" height="${h - (t === 'FDR' ? 4 : 1)}"><path d="M0 0h12v${h}H0z" fill="#efefef"/>${k}<path d="M0 .5h12" stroke="#222"/></svg></div>`);
});
$('sect').insertAdjacentHTML('beforeend', `<div class="bar3"></div><div class="mini flex-grow-1 bg-light text-center pt-1"><div class="d-grid gap-1 px-1" style="grid-template-columns:1fr 1fr 1fr;row-gap:6px!important;padding-top:2px">${['IN','EQ','FX','DYN','INS','FDR'].map(t => `<button class="border border-secondary" style="height:7px;line-height:5px">${t}</button>`).join('')}</div><div class="mt-1">SHOW/HIDE</div></div>`);

/* tracks: name, colour, clips as [start bar, bars], wave style */
const BARS = 84.2;
const eight = (...s) => s.map(b => [b, 8]);
const hits = [[1.5,.7],[5.5,.7],[37.5,.7],[41.5,.7]];
const tracks = [
 ['looperman-I-3109920-0260480-dark-dru...','#ed9121',eight(1,9,21,29,37,45,57,65),'block'],
 ['looperman-I-2797143-0260309-sad-emot...','#efc130',eight(9,21,29,45,57,65),'mid'],
 ['looperman-I-3988681-0234627-lenoxbea...','#fbfb1e',eight(9,21,29,45,57,65),'spike'],
 ['looperman-I-3988681-0228845-lenoxbea...','#c8ff00',eight(1,37),'mid'],
 ['looperman-I-3041481-0221453-panic','#a6d24c',eight(1,37),'thin'],
 ['looperman-I-3041481-0221453-panic copy','#a6d24c',eight(1,37),'thin'],
 ['looperman-I-0623169-0199136-star-mak...','#cbdfb2',eight(17,53),'fat'],
 ['looperman-I-2358906-0181656-candy','#3bae4b',[[17,4],[21,4],[53,4],[57,4]],'mid'],
 ['Audio Track 1','#678c41',hits,'thin'],
 ['Audio Track 1 copy','#678c41',hits,'thin']];
function wave(kind, w) {
  let d = '';
  if (kind === 'block') {
    [[0,6],[8,14],[17,25],[28,63],[65,77]].forEach(([a, b]) => [5.5, 14].forEach(y => {
      for (let x = a; x < b; x += 1) { const h = 3 + rnd() * 1; d += `M${x} ${(y - h).toFixed(1)}h1.100v${(h * 2).toFixed(1)}h-1.100z`; }
    }));
    return d + 'M0 5h77v1H0zM0 13.500h77v1H0z';
  }
  const amp = {mid:.7, spike:.4, thin:.2, fat:1.200}[kind];
  [5.5, 14.5].forEach(y => { for (let x = 0; x < w; x++) {
    const h = .5 + rnd() * amp + (kind === 'spike' && rnd() > .82 ? 1.3 : 0);
    d += `M${x} ${(y - h).toFixed(1)}h1.100v${(h * 2).toFixed(1)}h-1.100z`; } });
  return d;
}
const pct = b => (b / BARS * 100).toFixed(3) + '%';

/* ruler and grid lines */
let g = '', r = '';
for (let b = 0; b < 84; b++) {
  const big = b % 4 === 0;
  if (b <= 72 || big) g += `<line x1="${pct(b)}" x2="${pct(b)}" y1="0" y2="100%" stroke="${big ? (b <= 72 ? '#f8f8f8' : '#e0e0e0') : '#e6e6e6'}" stroke-width="${big && b <= 72 ? 1.5 : 1}"/>`;
  if (b < 72) g += `<line x1="${pct(b + .5)}" x2="${pct(b + .5)}" y1="0" y2="100%" stroke="#dedede"/>`;
  r += `<line x1="${pct(b)}" x2="${pct(b)}" y1="${big ? 0 : 16}" y2="20" stroke="#aaa"/>`;
}
$('ruler').innerHTML = `<svg class="gridlines">${r}</svg>` + [5,9,13,17,21,25,29,33,37,41,45,49,53,57,61,65,69,77,81].map(b => `<span style="left:${pct(b - 1)}">${b}</span>`).join('') +
 `<span style="left:0"><svg width="12" height="20" style="margin-left:-5px;overflow:visible"><path d="M4 2h4l4 4-4 4H4z" fill="#eee" stroke="#333"/><path d="M6 3.500v4h2" fill="none" stroke="#333"/><path d="M1 10h8v4.500L5 18l-4-3.500z" fill="#ccc" stroke="#333"/></svg></span>
 <span style="left:${pct(71)}"><svg width="10" height="10"><path d="M9 2H4L1 5l3 3h5z" fill="#ddd" stroke="#333"/><path d="M5 7V3.500h2v2H5l2 2" fill="none" stroke="#333"/></svg></span>
 <span style="left:${pct(72.4)}"><svg width="10" height="10"><path d="M1 2h8v6H1z" fill="#eee" stroke="#333"/><path d="M6 3.500H4v3h2M4 5h2" fill="none" stroke="#333" stroke-width=".8"/></svg></span>`;

let lanes = `<svg class="gridlines">${g}</svg><div class="lane first"></div>`;
tracks.forEach(([name, c, clips, kind], i) => {
  const last = i === 9;
  const s = last ? ['background:#d5121e;border-radius:50%;color:#fff;width:11px;height:11px;margin:0 1px', 'background:#18b818;color:#cfc;width:11px'] : ['', ''];
  $('tracks').insertAdjacentHTML('beforeend', `<div class="trow${last ? ' selrow' : ''}"><div class="tcol" style="background:${c}"><svg width="50" height="27" color="#222"><path d="M1 4h6L4 8z" fill="#000" opacity=".55"/><svg x="13" y="8" width="36" height="12" opacity=".85"><use href="#wave"/></svg>${last ? '<path d="M0 0h9v27H0z" fill="#33472a"/><path d="M1 4h6L4 8z" fill="#ddd"/><path d="M13.500 9.500h6l5 5-5 5h-6z" fill="#777" stroke="#fff"/>' : ''}</svg></div>
  <div class="tab">${name}</div><div class="tctl d-flex align-items-center" style="color:#777"><button class="msb">M</button><button class="msb">S</button>
  <button class="ico" aria-label="Automation" style="${s[0]}"><svg width="9" height="9"><use href="#auto"/></svg></button>
  <button class="ico" aria-label="Record enable">${last ? '<svg width="11" height="11"><circle cx="5.500" cy="5.500" r="5" fill="#d5121e"/><circle cx="5.500" cy="5.500" r="2" fill="#fff"/></svg>' : '<svg width="11" height="11"><use href="#rec"/></svg>'}</button>
  <button class="ico" aria-label="Monitor" style="${s[1]}"><svg width="10" height="10"><use href="#spk"/></svg></button></div></div>`);
  lanes += `<div class="lane${last ? ' selrow' : ''}">` + clips.map(([b, n]) => `<div class="clip" style="left:${pct(b - 1)};width:${pct(n)};background:${c}"><svg viewBox="0 0 ${Math.round(n * 9.6)} 21" preserveAspectRatio="none"><path fill="${kind === 'block' ? '#3d2708' : '#27300c'}" d="${wave(kind, n * 9.6)}"/></svg>${n > 1 ? '<i></i>' : ''}</div>`).join('') + '</div>';
});
lanes += `<svg class="gridlines"><line x1="${pct(72)}" x2="${pct(72)}" y1="0" y2="100%" stroke="#999" stroke-width="2"/><line x1="${pct(72.9)}" x2="${pct(72.9)}" y1="0" y2="100%" stroke="#666"/></svg><div class="vscroll"><div></div></div>`;
$('field').innerHTML = lanes;

/* song overview */
const ox = b => 7 + (b - 1) * 9.42, bar = (a, b, y, h, c) => `<rect x="${ox(a)}" y="${y}" width="${ox(b) - ox(a)}" height="${h}" fill="${c}"/>`;
$('over').innerHTML = '<path d="M0 0h7v14H0z" fill="#c9c9c9"/><path d="M7.500 0v14" stroke="#444"/>' +
 [[1,17],[21,53],[57,73]].map(([a, b]) => bar(a, b, 1, 1, '#c2701d')).join('') +
 [[9,17],[21,37],[45,53],[57,73]].map(([a, b]) => bar(a, b, 2, 3, '#e3b322')).join('') +
 [[1,9],[37,45]].map(([a, b]) => bar(a, b, 4, 4, '#9cc93c')).join('') +
 [[17,25],[53,61]].map(([a, b]) => bar(a, b, 9, 2, '#55a35b')).join('') +
 [1.5,5.5,37.5,41.5].map(b => bar(b, b + .7, 11, 2, '#5b6b4c')).join('') +
 '<path d="M685.500 0v14M694.500 0v14" stroke="#555"/><circle cx="683" cy="6" r="2" fill="#444"/><circle cx="694.500" cy="6" r="2" fill="#444"/><path d="M795 1v12q6 0 6-6t-6-6z" fill="none" stroke="#999"/>';

/* taskbar */
const adobe = (t, bg, fg) => `<span class="app" style="background:${bg};color:${fg}">${t}</span>`;
const S = b => `<svg width="17" height="17" viewBox="0 0 17 17">${b}</svg>`;
[
 ['Cortana', S('<circle cx="8.500" cy="8.500" r="4.500" fill="none" stroke="#111" stroke-width="1.500"/>')],
 ['Task view', S('<path d="M4 5h6v6H4zM4 3h6M4 13.500h6M13 3v11M12 6h2" fill="none" stroke="#333"/>')],
 ['Edge', S('<circle cx="8.500" cy="8.500" r="8" fill="#1586cf"/><path d="M1 7a8 8 0 0 1 15.500 1c0 3-4 4-6 2 1-3-4-5-9.500-3z" fill="#46c8a4"/><path d="M7 8q-2 7 7 6" fill="none" stroke="#0c4f9c" stroke-width="2"/><circle cx="9.500" cy="9" r="2" fill="#d5e3ec"/>')],
 ['Firefox', S('<circle cx="8.500" cy="9" r="7.500" fill="#ff6a2b"/><path d="M8 2q7-1 8 7-1-3-4-4z" fill="#ffcf3a"/><path d="M1 7q1-3 3-4v3z" fill="#ff4b55"/><circle cx="8.500" cy="9" r="3.800" fill="#7b3fd0"/><path d="M5 8q3-3 6 0l-3 1z" fill="#ffb32e"/>'), 'run'],
 ['Office', S('<path d="M3 4l7-3 4 1.500v12L10 16l-7-3 6 .5v-10L5 5v7l-2 1z" fill="#e13b17"/>')],
 ['Explorer', S('<path d="M1 3h5l1 2h8v9H1z" fill="#f5c842"/><path d="M4 15V9h9v6h-3v-3H7v3z" fill="#3b9ad9"/>')],
 ['Mail', S('<path d="M0 6l8.500-5L17 6v10H0z" fill="#1473bd"/><path d="M1 6h15l-7.500 6z" fill="#fff"/><path d="M0 6l8.500 6L17 6v10H0z" fill="#34a9e8"/>')],
 ['Fan', S('<g fill="#e06a22" stroke="#2a1a12"><circle cx="8.500" cy="4" r="3"/><circle cx="4" cy="12" r="3"/><circle cx="13" cy="12" r="3"/></g><circle cx="8.500" cy="9.500" r="3" fill="#3a1c10"/>')],
 ['Reason', S('<path d="M8.500 1L15 4.500v8L8.500 16 2 12.500v-8z" fill="#17100f"/><path d="M5 5l5-2 3 3-3 2-1 5-4-3z" fill="#e04a30"/>'), 'run'],
 ['Grid', S('<path d="M2 2h13v13H2z" fill="#3a1020"/><path d="M4 5h9M4 8h9M4 11h9M5.500 4v9M8.500 4v9M11.500 4v9" stroke="#8b2040" stroke-width=".8"/>')],
 ['Photoshop', adobe('Ps','#061e36','#39a9ff')],['Illustrator', adobe('Ai','#330a00','#ff9a1a')],['Premiere', adobe('Pr','#08005b','#a99bff')],
 ['After Effects', adobe('Ae','#08005b','#a99bff')],['InDesign', adobe('Id','#4a0220','#ff3d72')],['Audition', adobe('Au','#08005b','#a99bff')],
 ['Live', '<span class="app" style="background:#d3c3c4;color:#222;font-size:6px;border-radius:0">Live</span>'],
 ['OBS', S('<circle cx="8.500" cy="8.500" r="6.500" fill="#16161a"/><path d="M8 3q-1 4 2 5M13 8q-4-1-4 4M4 11q3 1 4-3" fill="none" stroke="#aaa" stroke-width="1.300"/>'), 'run act']
].forEach(([n, i, c]) => $('tapps').insertAdjacentHTML('beforeend', `<button aria-label="${n}" class="${c || ''}">${i}</button>`));
</script>
<script src="https://cdn.jsdelivr.net/npm/bootstrap@5.3.0/dist/js/bootstrap.bundle.min.js"></script>
</body>
</html>
